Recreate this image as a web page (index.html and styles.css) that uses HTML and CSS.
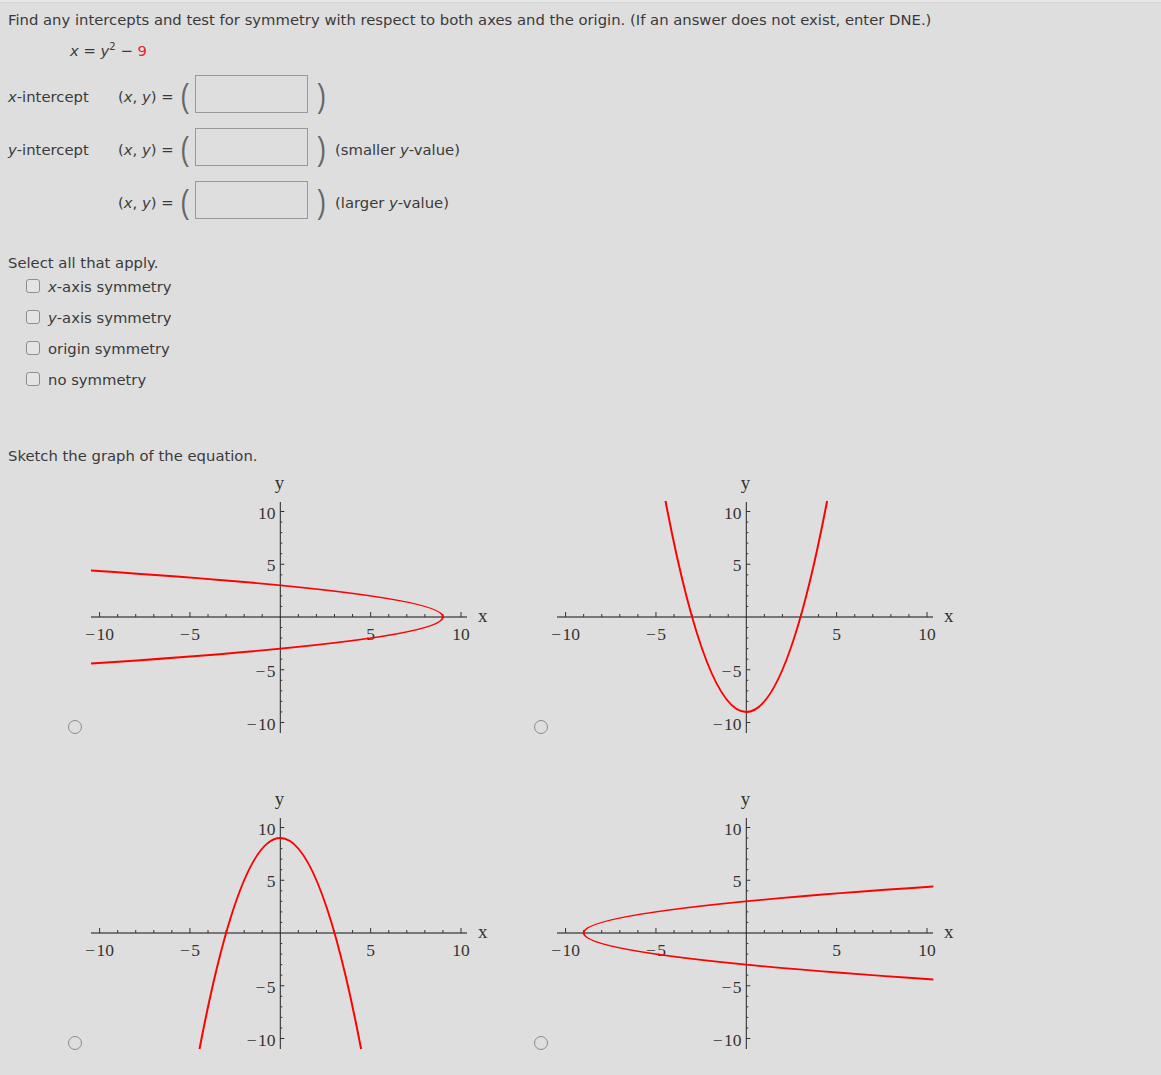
FILE: index.html
```html
<!DOCTYPE html>
<html lang="en">
<head>
<meta charset="utf-8">
<title>Intercepts and symmetry</title>
<link rel="stylesheet" href="styles.css">
</head>
<body>
<div class="topline"></div>
<div class="page">
  <p class="q">Find any intercepts and test for symmetry with respect to both axes and the origin. (If an answer does not exist, enter DNE.)</p>
  <p class="eq"><i>x</i> = <i>y</i><sup>2</sup> − <span class="red">9</span></p>

  <div class="rows">
    <div class="row">
      <span class="lbl"><i>x</i>-intercept</span>
      <span class="xy">(<i>x</i>, <i>y</i>) =</span>
      <span class="po">(</span><input class="box" type="text"><span class="pc">)</span>
    </div>
    <div class="row">
      <span class="lbl"><i>y</i>-intercept</span>
      <span class="xy">(<i>x</i>, <i>y</i>) =</span>
      <span class="po">(</span><input class="box" type="text"><span class="pc">)</span>
      <span class="note">(smaller <i>y</i>-value)</span>
    </div>
    <div class="row">
      <span class="lbl"></span>
      <span class="xy">(<i>x</i>, <i>y</i>) =</span>
      <span class="po">(</span><input class="box" type="text"><span class="pc">)</span>
      <span class="note">(larger <i>y</i>-value)</span>
    </div>
  </div>

  <p class="select">Select all that apply.</p>
  <ul class="checks">
    <li><input class="cb" type="checkbox"><span><i>x</i>-axis symmetry</span></li>
    <li><input class="cb" type="checkbox"><span><i>y</i>-axis symmetry</span></li>
    <li><input class="cb" type="checkbox"><span>origin symmetry</span></li>
    <li><input class="cb" type="checkbox"><span>no symmetry</span></li>
  </ul>

  <p class="sketch">Sketch the graph of the equation.</p>

  <div class="graphs">
    <div class="cell">
      <input class="rb" type="radio" name="g">
      <svg class="plot" width="410" height="268" viewBox="0 0 410 268">
        <defs>
          <g id="axes">
            <path class="xaxis" d="M7 147H383"/>
            <path class="yaxis" d="M196.3 32V263"/>
            <path class="tick" d="M15.6 147v-5M105.95 147v-5M286.65 147v-5M377 147v-5M33.67 147v-3M51.74 147v-3M69.81 147v-3M87.88 147v-3M124.02 147v-3M142.09 147v-3M160.16 147v-3M178.23 147v-3M214.37 147v-3M232.44 147v-3M250.51 147v-3M268.58 147v-3M304.72 147v-3M322.79 147v-3M340.86 147v-3M358.93 147v-3"/>
            <path class="tick" d="M196.3 41.5h4M196.3 94.25h4M196.3 199.75h4M196.3 252.5h4M196.3 52.05h2M196.3 62.6h2M196.3 73.15h2M196.3 83.7h2M196.3 104.8h2M196.3 115.35h2M196.3 125.9h2M196.3 136.45h2M196.3 157.55h2M196.3 168.1h2M196.3 178.65h2M196.3 189.2h2M196.3 210.3h2M196.3 220.85h2M196.3 231.4h2M196.3 241.95h2"/>
            <text class="tl tx" x="15.6" y="169.5">−&#8202;10</text>
            <text class="tl tx" x="105.95" y="169.5">−&#8202;5</text>
            <text class="tl tx" x="286.65" y="169.5">5</text>
            <text class="tl tx" x="377" y="169.5">10</text>
            <text class="tl ty" x="191.5" y="48.5">10</text>
            <text class="tl ty" x="191.5" y="101.3">5</text>
            <text class="tl ty" x="191.5" y="206.8">−&#8202;5</text>
            <text class="tl ty" x="191.5" y="259.5">−&#8202;10</text>
            <text class="al" x="394" y="152">x</text>
            <text class="al tx" x="195.5" y="19">y</text>
          </g>
        </defs>
        <use href="#axes"/>
        <path class="curve" d="M7 100.44Q710.9 147 7 193.56"/>
      </svg>
    </div>
    <div class="cell">
      <input class="rb" type="radio" name="g">
      <svg class="plot" width="410" height="268" viewBox="0 0 410 268">
        <use href="#axes"/>
        <path class="curve" d="M115.5 31Q196.3 453 277.1 31"/>
      </svg>
    </div>
    <div class="cell">
      <input class="rb" type="radio" name="g">
      <svg class="plot" width="410" height="268" viewBox="0 0 410 268">
        <use href="#axes"/>
        <path class="curve" d="M115.5 263Q196.3 -159 277.1 263"/>
      </svg>
    </div>
    <div class="cell">
      <input class="rb" type="radio" name="g">
      <svg class="plot" width="410" height="268" viewBox="0 0 410 268">
        <use href="#axes"/>
        <path class="curve" d="M383.3 100.6Q-316 147 383.3 193.4"/>
      </svg>
    </div>
  </div>
</div>
</body>
</html>
```
FILE: styles.css
```css
html, body {
  margin: 0;
  padding: 0;
}
body {
  background: #dedede;
  font-family: "DejaVu Sans", Verdana, sans-serif;
  font-size: 14.8px;
  color: #3a3a3a;
}
.topline {
  height: 2px;
  background: #e7e7e7;
  border-bottom: 1px solid #d3d3d3;
}
.page {
  padding: 7px 8px 0 8px;
}
p {
  margin: 0;
  line-height: 20px;
}
.eq {
  margin: 11px 0 0 62px;
}
.eq sup {
  font-size: 10px;
  line-height: 0;
  vertical-align: 6px;
}
.red {
  color: #e8232a;
}
.rows {
  margin-top: 14px;
  display: flex;
  flex-direction: column;
  gap: 15px;
}
.row {
  display: flex;
  align-items: center;
  height: 38px;
}
.lbl, .xy, .note {
  padding-top: 5px;
  flex: none;
}
.lbl {
  width: 110px;
}
.xy {
  width: 63px;
}
.po, .pc {
  display: inline-block;
  width: 8px;
  flex: none;
  font-family: "Liberation Sans", Arial, sans-serif;
  font-size: 22px;
  line-height: 22px;
  color: #666;
  transform: translateY(2px) scale(1.15, 1.5);
}
.po {
  margin-right: 6px;
}
.pc {
  margin-left: 10px;
  margin-right: 9px;
}
.box {
  box-sizing: border-box;
  width: 113px;
  height: 38px;
  margin: 0;
  padding: 0;
  border: 1px solid #999;
  background: transparent;
  flex: none;
}
.select {
  margin-top: 34px;
}
.checks {
  list-style: none;
  margin: 3px 0 0 18px;
  padding: 0;
}
.checks li {
  display: flex;
  align-items: center;
  height: 20px;
  margin-top: 11px;
}
.checks li:first-child {
  margin-top: 0;
}
.cb {
  appearance: none;
  -webkit-appearance: none;
  box-sizing: border-box;
  width: 14px;
  height: 14px;
  margin: 0 8px 0 0;
  border: 1px solid #8f8f8f;
  border-radius: 3px;
  background: #e4e4e4;
}
.sketch {
  margin-top: 57px;
}
.graphs {
  margin: 4px 0 0 60px;
  display: grid;
  grid-template-columns: 466px 466px;
  row-gap: 48px;
}
.cell {
  display: flex;
  align-items: flex-end;
}
.rb {
  appearance: none;
  -webkit-appearance: none;
  box-sizing: border-box;
  width: 14px;
  height: 14px;
  margin: 0 2px 4px 0;
  border: 1px solid #8a8a8a;
  border-radius: 50%;
  background: transparent;
  flex: none;
}
.plot {
  display: block;
  flex: none;
}
.xaxis {
  stroke: #555;
  stroke-width: 1.4;
  fill: none;
}
.yaxis {
  stroke: #222;
  stroke-width: 1;
  fill: none;
}
.tick {
  stroke: #333;
  stroke-width: 1;
  fill: none;
}
.tl {
  font-family: "Liberation Serif", "Times New Roman", serif;
  font-size: 17.5px;
  fill: #333;
}
.al {
  font-family: "Liberation Serif", "Times New Roman", serif;
  font-size: 19px;
  fill: #333;
}
.tx {
  text-anchor: middle;
}
.ty {
  text-anchor: end;
}
.curve {
  stroke: #ff0000;
  stroke-width: 2;
  fill: none;
}
```
